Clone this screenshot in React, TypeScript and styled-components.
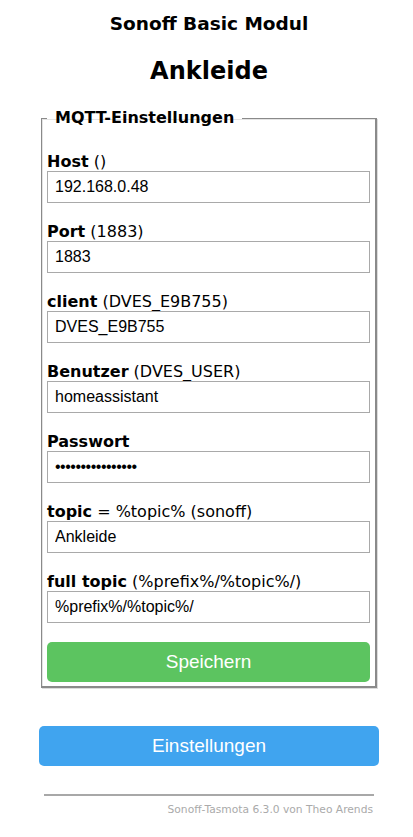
import styled, { createGlobalStyle } from "styled-components";

const GlobalStyle = createGlobalStyle`
  html, body {
    margin: 0;
    padding: 0;
    background: #ffffff;
  }
  body {
    font-family: "DejaVu Sans", Verdana, sans-serif;
    color: #000;
  }
`;

const Page = styled.div`
  display: flex;
  justify-content: center;
  padding: 13px 0 0 5px;
`;

const Column = styled.div`
  width: 340px;
  display: flex;
  flex-direction: column;
`;

const Header = styled.div`
  text-align: center;
`;

const ModuleName = styled.h3`
  margin: 0;
  font-size: 18.5px;
  line-height: 22px;
  font-weight: bold;
`;

const DeviceName = styled.h2`
  margin: 22px 0 0;
  font-size: 24px;
  line-height: 28px;
  font-weight: bold;
`;

const Fieldset = styled.fieldset`
  margin: 23px 2px 0;
  padding: 4px 5px 4px 5px;
  border-style: solid;
  border-width: 1px 2px 2px 1px;
  border-color: #8a8a8a #8a8a8a #8a8a8a #8a8a8a;
  box-shadow: inset 1px 1px 0 #e4e4e4, 1px 1px 0 #dcdcdc;
`;

const Legend = styled.legend`
  padding: 0 8px;
  font-size: 16px;
  line-height: 20px;
  font-weight: bold;
`;

const Field = styled.div<{ $first?: boolean }>`
  display: flex;
  flex-direction: column;
  margin-top: ${(p) => (p.$first ? "20px" : "19px")};
`;

const Label = styled.label`
  font-size: 16px;
  line-height: 19px;
  white-space: nowrap;
`;

const Key = styled.b`
  font-weight: bold;
`;

const Input = styled.input<{ $dots?: boolean }>`
  box-sizing: border-box;
  width: 100%;
  height: 32px;
  margin: 0;
  padding: 0 7px;
  border: 1px solid #a9a9a9;
  font-family: "Liberation Sans", Arial, sans-serif;
  font-size: 16px;
  color: #000;
  outline: none;
  background: #fff;
  letter-spacing: ${(p) => (p.$dots ? "-0.5px" : "0")};
`;

const Button = styled.button<{ $color: string }>`
  display: block;
  box-sizing: border-box;
  width: 100%;
  height: 40px;
  border: 0;
  border-radius: 5px;
  background-color: ${(p) => p.$color};
  color: #fff;
  font-family: "Liberation Sans", Arial, sans-serif;
  font-size: 19px;
  line-height: 40px;
  padding: 0;
  cursor: pointer;
`;

const SaveRow = styled.div`
  margin-top: 19px;
`;

const MenuRow = styled.div`
  margin-top: 38px;
`;

const Rule = styled.hr`
  margin: 28px 5px 0;
  border: 0;
  border-top: 2px solid #a8a8a8;
  height: 0;
`;

const Footer = styled.div`
  text-align: right;
  padding-right: 6px;
  margin-top: 7px;
  font-size: 10.7px;
  line-height: 14px;
  color: #aaaaaa;
`;

const fields = [
  { key: "Host", hint: " ()", value: "192.168.0.48" },
  { key: "Port", hint: " (1883)", value: "1883" },
  { key: "client", hint: " (DVES_E9B755)", value: "DVES_E9B755" },
  { key: "Benutzer", hint: " (DVES_USER)", value: "homeassistant" },
  { key: "Passwort", hint: "", value: "••••••••••••••••", dots: true },
  { key: "topic", hint: " = %topic% (sonoff)", value: "Ankleide" },
  { key: "full topic", hint: " (%prefix%/%topic%/)", value: "%prefix%/%topic%/" },
];

const App: React.FC = () => {
  return (
    <>
      <GlobalStyle />
      <Page>
        <Column>
          <Header>
            <ModuleName>Sonoff Basic Modul</ModuleName>
            <DeviceName>Ankleide</DeviceName>
          </Header>
          <Fieldset>
            <Legend>MQTT-Einstellungen</Legend>
            {fields.map((f, i) => (
              <Field key={f.key} $first={i === 0}>
                <Label>
                  <Key>{f.key}</Key>
                  {f.hint}
                </Label>
                <Input readOnly value={f.value} $dots={f.dots} />
              </Field>
            ))}
            <SaveRow>
              <Button $color="#5cc460">Speichern</Button>
            </SaveRow>
          </Fieldset>
          <MenuRow>
            <Button $color="#40a4ef">Einstellungen</Button>
          </MenuRow>
          <Rule />
          <Footer>Sonoff-Tasmota 6.3.0 von Theo Arends</Footer>
        </Column>
      </Page>
    </>
  );
};

export default App;
